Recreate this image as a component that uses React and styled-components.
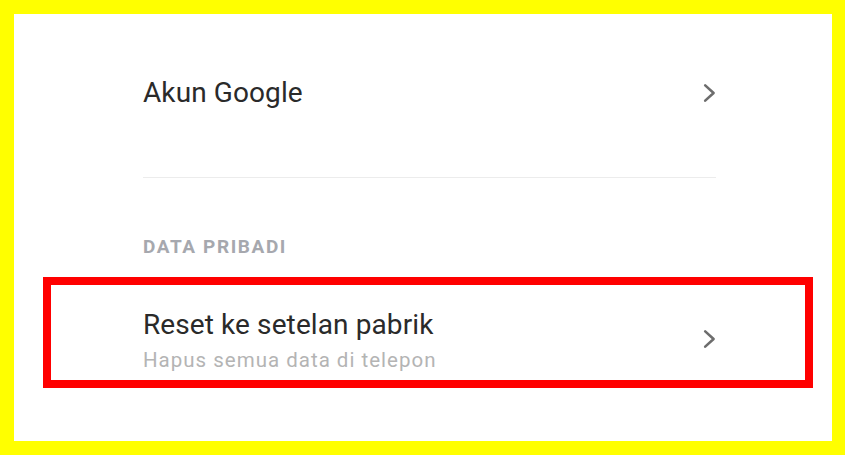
import styled, { createGlobalStyle } from "styled-components";

const GlobalStyle = createGlobalStyle`
  html, body {
    margin: 0;
    padding: 0;
    background: #ffff00;
  }
  body {
    font-family: Roboto, "Liberation Sans", Arial, sans-serif;
    -webkit-font-smoothing: antialiased;
  }
`;

const Frame = styled.div`
  width: 845px;
  height: 455px;
  box-sizing: border-box;
  padding: 14px 13px 14px 14px;
  background: #ffff00;
`;

const Panel = styled.div`
  height: 100%;
  background: #ffffff;
  padding: 0 116px 0 129px;
  box-sizing: border-box;
`;

const Row = styled.div`
  display: flex;
  align-items: center;
  justify-content: space-between;
  padding: ${(p) => p.pad || "0"};
  border-bottom: ${(p) => (p.divider ? "1px solid #ececec" : "none")};
`;

const Texts = styled.div`
  display: flex;
  flex-direction: column;
`;

const Title = styled.span`
  font-size: 28px;
  line-height: 34px;
  color: #2a2a2a;
  letter-spacing: 0.1px;
`;

const Subtitle = styled.span`
  margin-top: 6px;
  font-size: 20.5px;
  line-height: 24px;
  letter-spacing: 1px;
  color: #b4b4b4;
`;

const SectionHeader = styled.div`
  margin-top: 58px;
  font-size: 19px;
  line-height: 22px;
  font-weight: 700;
  letter-spacing: 1.6px;
  color: #a6a8ae;
`;

const Highlight = styled.div`
  margin: 19px -97px 0 -100px;
  border: 8px solid #ff0000;
  padding: 0 89px 0 92px;
`;

const ChevronWrap = styled.span`
  display: flex;
  padding-bottom: ${(p) => p.lift || 0}px;
  color: #6d6d6d;
`;

const Chevron = () => (
  <svg width="13" height="20" viewBox="0 0 13 20" fill="none">
    <path
      d="M2.2 2.4 L10.6 10 L2.2 17.6"
      stroke="currentColor"
      strokeWidth="2.6"
      strokeLinecap="round"
      strokeLinejoin="round"
    />
  </svg>
);

const App = () => {
  return (
    <>
      <GlobalStyle />
      <Frame>
        <Panel>
          <Row pad="62px 0 67px" divider>
            <Title>Akun Google</Title>
            <ChevronWrap>
              <Chevron />
            </ChevronWrap>
          </Row>
          <SectionHeader>DATA PRIBADI</SectionHeader>
          <Highlight>
            <Row pad="23px 0 8px">
              <Texts>
                <Title>Reset ke setelan pabrik</Title>
                <Subtitle>Hapus semua data di telepon</Subtitle>
              </Texts>
              <ChevronWrap lift={3}>
                <Chevron />
              </ChevronWrap>
            </Row>
          </Highlight>
        </Panel>
      </Frame>
    </>
  );
};

export default App;
